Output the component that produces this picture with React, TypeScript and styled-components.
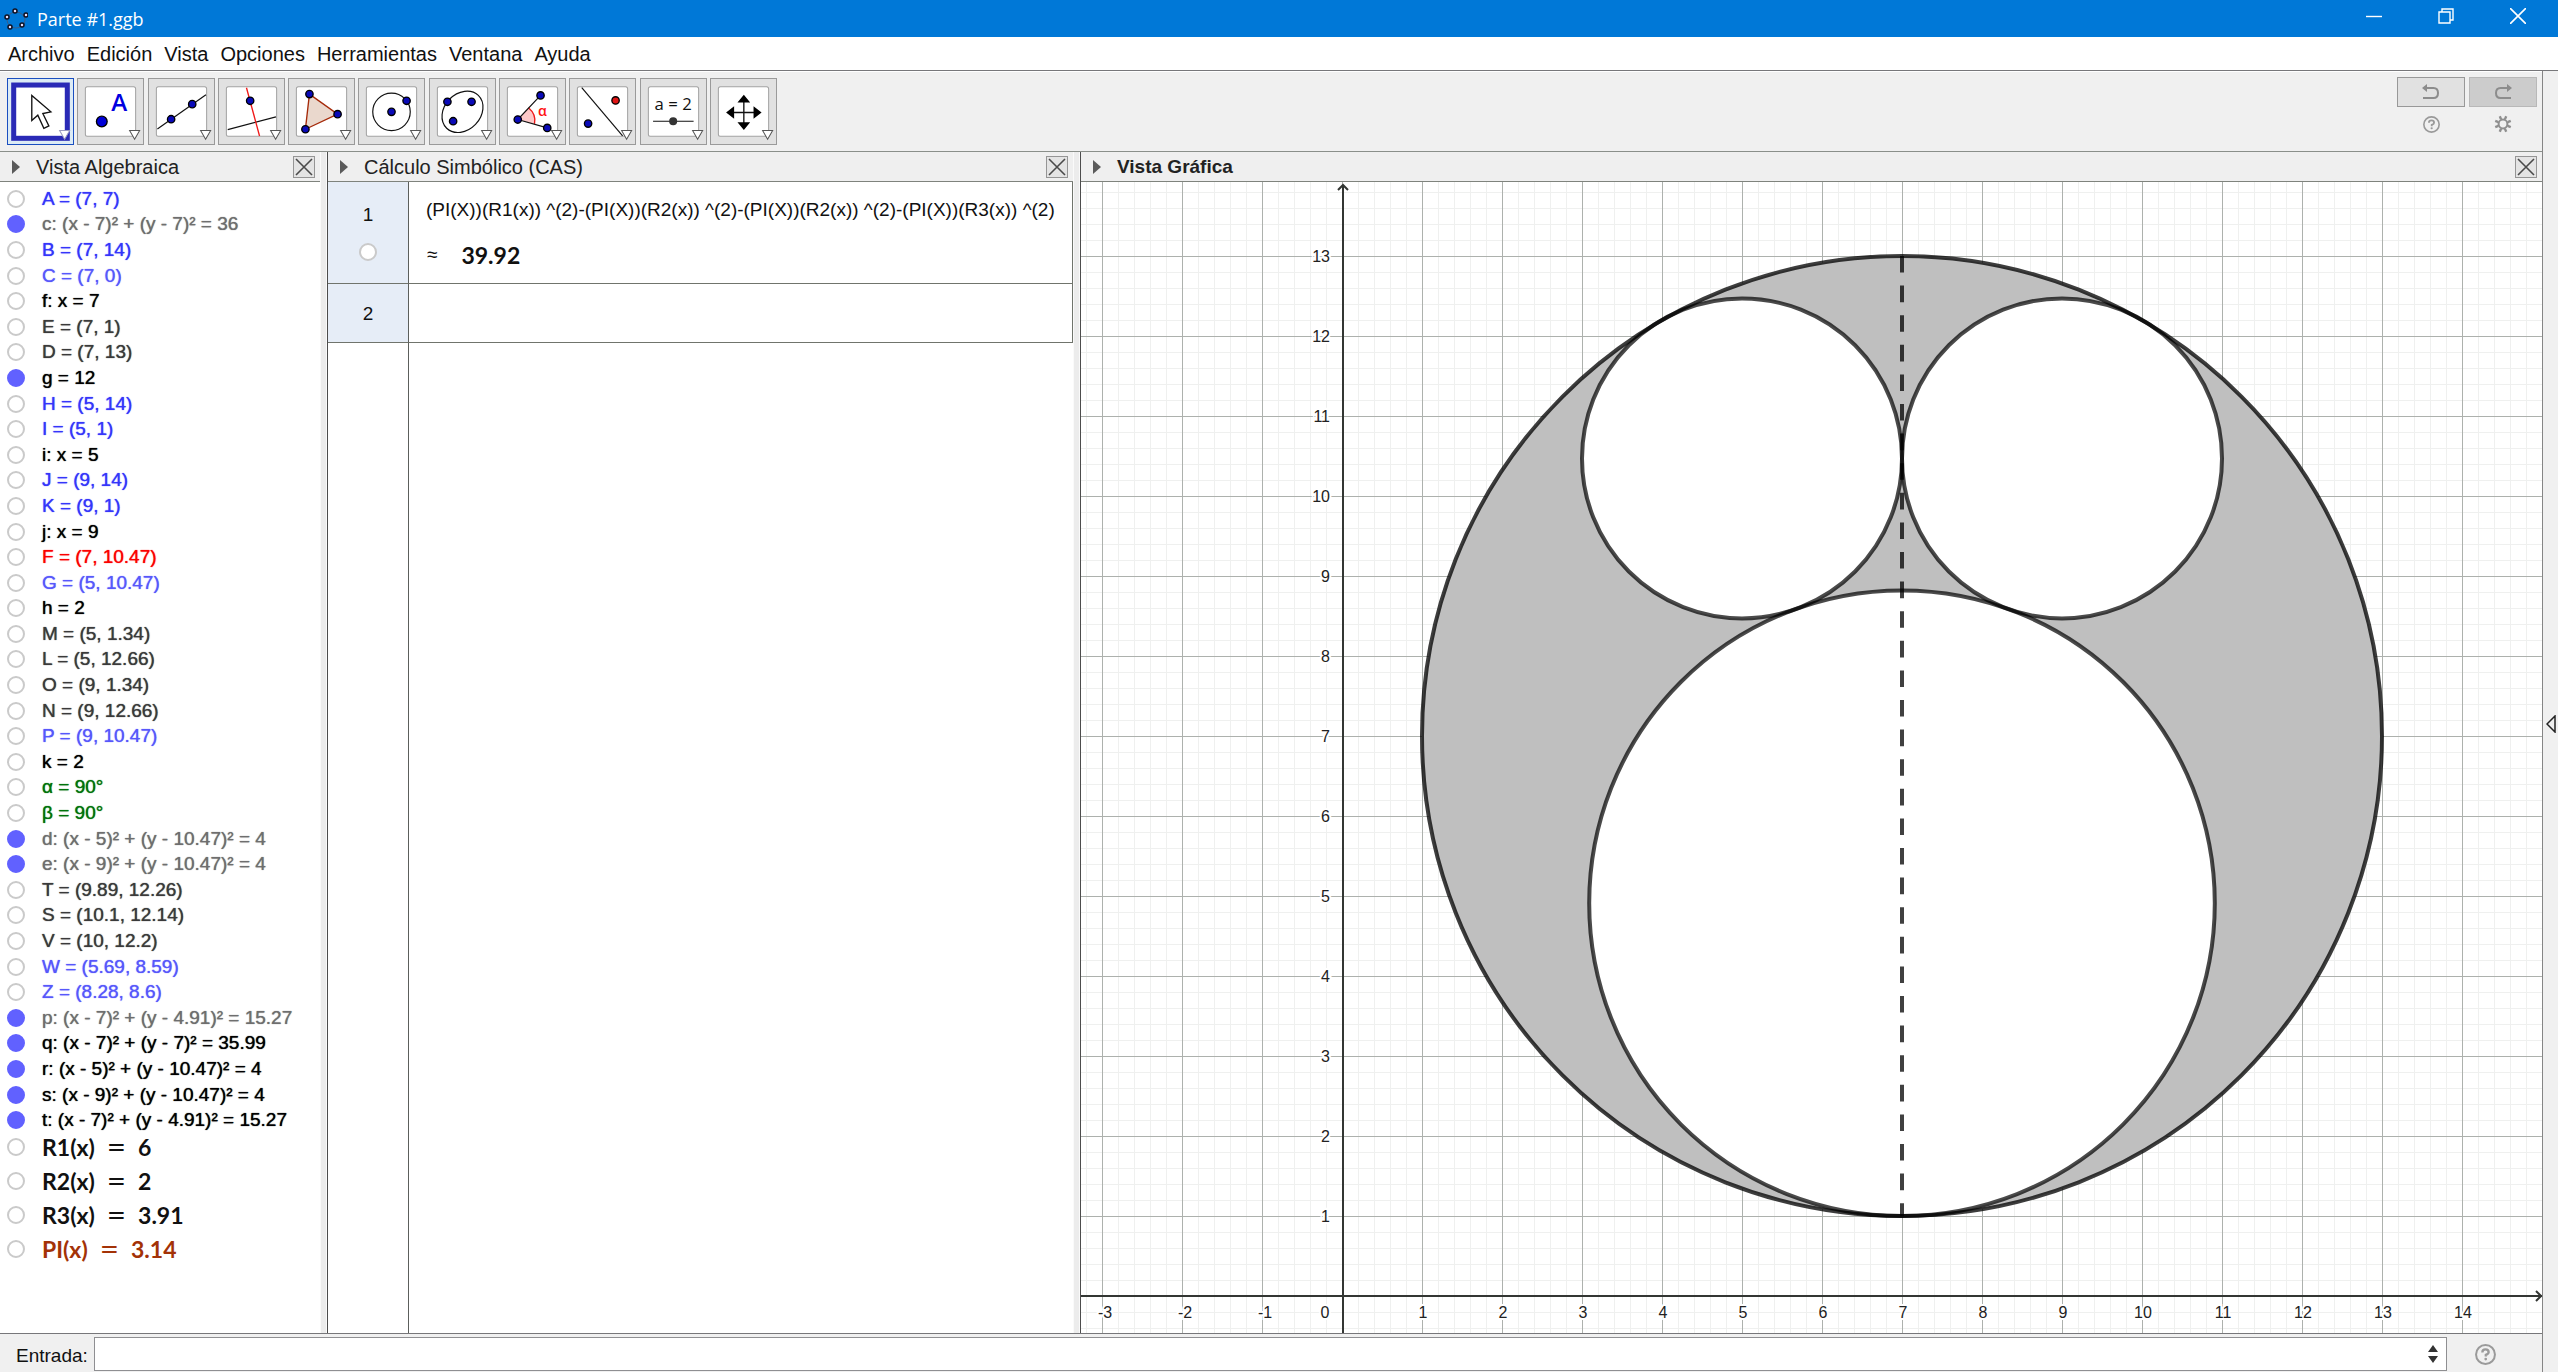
import React, { ReactNode } from "react";
import styled, { createGlobalStyle } from "styled-components";

const GlobalStyle = createGlobalStyle`
  *, *::before, *::after { box-sizing: border-box; }
  html, body { margin: 0; padding: 0; }
  body {
    font-family: "Liberation Sans", Arial, sans-serif;
    font-size: 19px;
    color: #111;
    background: #f0f0f0;
  }
  button, input { font: inherit; color: inherit; }
`;

/* ---------- window frame ---------- */

const Window = styled.div`
  display: flex;
  flex-direction: column;
  height: 100vh;
  overflow: hidden;
`;

const TitleBar = styled.header`
  display: flex;
  align-items: center;
  height: 37px;
  flex: none;
  padding: 0 4px;
  background: #0078d7;
  color: #fff;
`;

const WindowTitle = styled.h1`
  flex: 1;
  margin: 0 0 0 9px;
  font: 400 18px/24px "Open Sans", "Noto Sans", sans-serif;
`;

const CaptionButton = styled.button`
  display: flex;
  justify-content: center;
  width: 72px;
  height: 37px;
  padding: 8px 0 0;
  border: 0;
  background: transparent;
`;

const CaptionButtons = styled.div`
  display: flex;
`;

const MenuBar = styled.nav`
  display: flex;
  align-items: center;
  gap: 12px;
  height: 34px;
  flex: none;
  padding: 0 8px;
  background: #fff;
  border-bottom: 1px solid #77777a;
`;

const MenuItem = styled.button`
  padding: 0;
  border: 0;
  background: transparent;
  font-size: 20px;
  line-height: 24px;
`;

const Work = styled.div`
  display: flex;
  flex: 1;
  min-height: 0;
`;

const Main = styled.main`
  display: flex;
  flex-direction: column;
  flex: 1;
  min-width: 0;
`;

const SideStrip = styled.aside`
  display: flex;
  align-items: center;
  justify-content: center;
  width: 16px;
  flex: none;
  border-left: 1px solid #858585;
`;

const SideToggle = styled.button`
  display: flex;
  padding: 4px 0 0 1px;
  border: 0;
  background: transparent;
`;

/* ---------- toolbar ---------- */

const Toolbar = styled.div`
  display: flex;
  justify-content: space-between;
  height: 81px;
  flex: none;
  padding: 6px 5px 0 7px;
  border-top: 1px solid #fff;
  border-bottom: 1px solid #8a8f8a;
`;

const ToolGroup = styled.div`
  display: flex;
  justify-content: space-between;
  width: 770px;
`;

const ToolButton = styled.button<{ $active?: boolean }>`
  width: 67px;
  height: 67px;
  padding: 0;
  border: 1px solid ${(p) => (p.$active ? "#1a4fc0" : "#9a9a9a")};
  background: ${(p) => (p.$active ? "#dcebf5" : "#e1e1e1")};
  svg { display: block; margin: -1px; }
`;

const Actions = styled.div`
  display: grid;
  grid-template-columns: 68px 68px;
  grid-template-rows: 30px 34px;
  column-gap: 4px;
  justify-items: center;
  align-items: center;
  align-content: start;
  margin-top: -1px;
`;

const HistoryButton = styled.button<{ $off?: boolean }>`
  display: flex;
  align-items: center;
  justify-content: center;
  width: 68px;
  height: 30px;
  padding: 0;
  border: 1px solid ${(p) => (p.$off ? "#b8b8b8" : "#989898")};
  background: ${(p) => (p.$off ? "#cccccc" : "#e1e1e1")};
`;

const IconButton = styled.button`
  display: flex;
  padding: 0;
  border: 0;
  background: transparent;
`;

/* ---------- panels ---------- */

const Panels = styled.div`
  display: grid;
  grid-template-columns: 320px 7px 746px 7px minmax(0, 1fr);
  flex: 1;
  min-height: 0;
`;

const Splitter = styled.div`
  border-left: 1px solid #fafafa;
  border-right: 1px solid #fafafa;
  background: #ececec;
`;

const Panel = styled.section<{ $line?: boolean }>`
  display: flex;
  flex-direction: column;
  min-width: 0;
  min-height: 0;
  background: #fff;
  border-left: ${(p) => (p.$line ? "1px solid #4c4c4c" : "0")};
`;

const PanelHeader = styled.div`
  display: flex;
  align-items: center;
  gap: 16px;
  height: 30px;
  flex: none;
  padding: 0 5px 0 12px;
  background: #efefef;
  border-bottom: 1px solid #7f837d;
`;

const PanelTitle = styled.h2<{ $bold?: boolean }>`
  flex: 1;
  margin: 0;
  font-size: ${(p) => (p.$bold ? "19px" : "20px")};
  line-height: 24px;
  font-weight: ${(p) => (p.$bold ? 700 : 400)};
  color: #222;
`;

const CloseButton = styled.button`
  display: flex;
  align-items: center;
  justify-content: center;
  width: 22px;
  height: 22px;
  padding: 0;
  border: 1px solid #959595;
  background: #e4e4e4;
`;

/* ---------- algebra list ---------- */

const AlgebraBody = styled.div`
  padding-top: 4px;
  overflow: hidden;
`;

const ObjectList = styled.ul`
  display: grid;
  grid-auto-rows: 1fr;
  height: 947px;
  margin: 0;
  padding: 0;
  list-style: none;
`;

const FunctionList = styled(ObjectList)`
  grid-auto-rows: 34px;
  height: auto;
  margin-top: -3px;
`;

const ObjectRow = styled.li`
  display: flex;
  align-items: center;
  min-height: 0;
`;

const ObjectLabel = styled.label<{ $color: string }>`
  display: flex;
  align-items: center;
  gap: 17px;
  padding-left: 7px;
  line-height: 24px;
  color: ${(p) => p.$color};
  text-shadow: 0 0 1px currentColor;
`;

const Marble = styled.input`
  appearance: none;
  width: 18px;
  height: 18px;
  flex: none;
  margin: 0;
  border: 2px solid #cacaca;
  border-radius: 50%;
  background: #fff;
  &:checked {
    border-color: #6161ff;
    background: #6161ff;
  }
`;

const Formula = styled.span`
  display: flex;
  align-items: center;
  gap: 12px;
  font: 700 23px/28px Lato, "Open Sans", sans-serif;
  text-shadow: none;
`;

const Equals = styled.span`
  font: 400 23px/28px "DejaVu Sans", sans-serif;
`;

/* ---------- CAS table ---------- */

const CasTable = styled.table`
  width: 100%;
  height: 100%;
  border-collapse: separate;
  border-spacing: 0;
`;

const CasRow = styled.tr<{ $height?: string }>`
  height: ${(p) => p.$height || "auto"};
`;

const CasIndex = styled.th<{ $blank?: boolean }>`
  width: 81px;
  padding: 2px 0 0;
  font-weight: 400;
  border-right: 1px solid #5c5f5c;
  border-bottom: ${(p) => (p.$blank ? "0" : "1px solid #70746c")};
  background: ${(p) => (p.$blank ? "#fff" : "#e6edf7")};
`;

const CasIndexStack = styled.div`
  display: flex;
  flex-direction: column;
  align-items: center;
  gap: 16px;
  padding-bottom: 4px;
  line-height: 24px;
`;

const CasCell = styled.td<{ $blank?: boolean }>`
  padding: 0 0 0 17px;
  border-right: ${(p) => (p.$blank ? "0" : "1px solid #70746c")};
  border-bottom: ${(p) => (p.$blank ? "0" : "1px solid #70746c")};
`;

const CasInput = styled.div`
  line-height: 24px;
  margin-bottom: 20px;
  white-space: nowrap;
`;

const CasOutput = styled.div`
  display: flex;
  align-items: center;
  gap: 24px;
  height: 26px;
  padding-left: 1px;
`;

/* ---------- graphics ---------- */

const Plot = styled.svg`
  display: block;
  width: 100%;
  flex: 1;
  min-height: 0;
  font-family: "Liberation Sans", Arial, sans-serif;
  font-size: 16px;
`;

const AxisLabel = styled.text`
  fill: #222;
  stroke: #fff;
  stroke-width: 4px;
  paint-order: stroke;
`;

/* ---------- input bar ---------- */

const InputBar = styled.form`
  display: flex;
  align-items: center;
  height: 39px;
  flex: none;
  padding: 2px 46px 0 16px;
  border-top: 1px solid #77777a;
`;

const InputLabel = styled.label`
  width: 78px;
  padding-top: 3px;
  line-height: 24px;
`;

const InputFrame = styled.div`
  display: flex;
  align-items: center;
  flex: 1;
  height: 34px;
  margin-right: 28px;
  padding-right: 8px;
  border: 1px solid #8f8f92;
  background: #fff;
`;

const CommandInput = styled.input`
  flex: 1;
  min-width: 0;
  height: 30px;
  padding: 0 6px;
  border: 0;
  outline: 0;
  background: transparent;
`;

/* ---------- data ---------- */

const BLUE = "#3535fa";
const PALE = "#5757fb";
const DARK = "#3a3a3a";
const GREY = "#6e6e6e";
const BLACK = "#000";
const GREEN = "#00720a";

type Item = [text: string, color: string, shown?: boolean];

const objects: Item[] = [
  ["A = (7, 7)", BLUE],
  ["c: (x - 7)² + (y - 7)² = 36", GREY, true],
  ["B = (7, 14)", BLUE],
  ["C = (7, 0)", PALE],
  ["f: x = 7", BLACK],
  ["E = (7, 1)", DARK],
  ["D = (7, 13)", DARK],
  ["g = 12", BLACK, true],
  ["H = (5, 14)", BLUE],
  ["I = (5, 1)", BLUE],
  ["i: x = 5", BLACK],
  ["J = (9, 14)", BLUE],
  ["K = (9, 1)", BLUE],
  ["j: x = 9", BLACK],
  ["F = (7, 10.47)", "#fb0000"],
  ["G = (5, 10.47)", PALE],
  ["h = 2", BLACK],
  ["M = (5, 1.34)", DARK],
  ["L = (5, 12.66)", DARK],
  ["O = (9, 1.34)", DARK],
  ["N = (9, 12.66)", DARK],
  ["P = (9, 10.47)", PALE],
  ["k = 2", BLACK],
  ["α = 90°", GREEN],
  ["β = 90°", GREEN],
  ["d: (x - 5)² + (y - 10.47)² = 4", GREY, true],
  ["e: (x - 9)² + (y - 10.47)² = 4", GREY, true],
  ["T = (9.89, 12.26)", DARK],
  ["S = (10.1, 12.14)", DARK],
  ["V = (10, 12.2)", DARK],
  ["W = (5.69, 8.59)", PALE],
  ["Z = (8.28, 8.6)", PALE],
  ["p: (x - 7)² + (y - 4.91)² = 15.27", GREY, true],
  ["q: (x - 7)² + (y - 7)² = 35.99", BLACK, true],
  ["r: (x - 5)² + (y - 10.47)² = 4", BLACK, true],
  ["s: (x - 9)² + (y - 10.47)² = 4", BLACK, true],
  ["t: (x - 7)² + (y - 4.91)² = 15.27", BLACK, true],
];

const functions = [
  { name: "R1(x)", value: "6", color: "#111" },
  { name: "R2(x)", value: "2", color: "#111" },
  { name: "R3(x)", value: "3.91", color: "#111" },
  { name: "PI(x)", value: "3.14", color: "#a33207" },
];

/* ---------- tool icons: drawn on a 200 unit wide button face ---------- */

const Dot = ({ x, y, r = 11, fill = "#0a0ab8" }: { x: number; y: number; r?: number; fill?: string }) => (
  <circle cx={x} cy={y} r={r} fill={fill} stroke="#000" strokeWidth={4} />
);

interface Tool {
  name: string;
  left: number;
  art: ReactNode;
}

const line = { stroke: "#111", strokeWidth: 3.5, fill: "none" };

const tools: Tool[] = [
  {
    name: "Elige y mueve",
    left: 20,
    art: <path d="M94 287V362L112 346L130 385L145 378L127 341L151 336Z" fill="#fff" stroke="#111" strokeWidth={4} />,
  },
  {
    name: "Punto",
    left: 231,
    art: (
      <>
        <Dot x={305} y={365} r={16} fill="#0000d8" />
        <text x={357} y={335} textAnchor="middle" fontSize={72} fontFamily="Open Sans" fontWeight={600} fill="#0000e0">A</text>
      </>
    ),
  },
  {
    name: "Recta",
    left: 442,
    art: (
      <>
        <path d="M470 387L615 285" {...line} />
        <Dot x={511} y={358} />
        <Dot x={574} y={313} />
      </>
    ),
  },
  {
    name: "Perpendicular",
    left: 653,
    art: (
      <>
        <path d="M682 389L826 351" {...line} />
        <path d="M738 264L777 408" {...line} stroke="#f01818" strokeWidth={4} />
        <Dot x={749} y={303} />
      </>
    ),
  },
  {
    name: "Polígono",
    left: 865,
    art: (
      <>
        <path d="M929 283L1013 343L917 388Z" fill="#ead8cd" stroke="#a52a0a" strokeWidth={4} />
        <Dot x={929} y={283} />
        <Dot x={1013} y={343} />
        <Dot x={917} y={388} />
      </>
    ),
  },
  {
    name: "Circunferencia",
    left: 1076,
    art: (
      <>
        <circle cx={1176} cy={336} r={56} {...line} />
        <Dot x={1176} y={336} />
        <Dot x={1221} y={303} />
      </>
    ),
  },
  {
    name: "Elipse",
    left: 88,
    art: (
      <>
        <ellipse cx={188} cy={336} rx={68} ry={54} transform="rotate(-46 188 336)" {...line} />
        <Dot x={143} y={306} />
        <Dot x={215} y={306} />
        <Dot x={160} y={364} />
      </>
    ),
  },
  {
    name: "Ángulo",
    left: 298,
    art: (
      <>
        <path d="M354 359L386 324Q410 344 404 372Z" fill="#fcc8c8" stroke="none" />
        <path d="M386 324Q410 344 404 372" fill="none" stroke="#f01818" strokeWidth={4} />
        <path d="M422 287L354 359L442 384" {...line} />
        <Dot x={422} y={287} />
        <Dot x={354} y={359} />
        <Dot x={442} y={384} />
        <text x={428} y={348} textAnchor="middle" fontSize={42} fontFamily="Open Sans" fontWeight={600} fill="#ff1010">α</text>
      </>
    ),
  },
  {
    name: "Simetría axial",
    left: 510,
    art: (
      <>
        <path d="M548 264L670 408" {...line} />
        <Dot x={567} y={371} />
        <Dot x={649} y={302} fill="#e01515" />
      </>
    ),
  },
  {
    name: "Deslizador",
    left: 721,
    art: (
      <>
        <text x={820} y={330} textAnchor="middle" fontSize={50} fontFamily="Open Sans" fill="#111">a = 2</text>
        <path d="M760 364H881" {...line} />
        <circle cx={820} cy={364} r={12} fill="#333" />
      </>
    ),
  },
  {
    name: "Desplaza vista gráfica",
    left: 932,
    art: (
      <>
        <path d="M1033 300V376M996 338H1070" {...line} strokeWidth={4} />
        <path
          d="M1033 285L1052 308H1014ZM1033 390L1052 367H1014ZM980 338L1004 319V357ZM1086 338L1062 319V357Z"
          fill="#000"
        />
      </>
    ),
  },
];

const ToolIcon = ({ tool, active }: { tool: Tool; active: boolean }) => {
  const l = tool.left;
  return (
    <svg width="67" height="67" viewBox={`${l} 235 200 200`} aria-hidden="true">
      {active ? (
        <rect x={l + 20} y={256} width={160} height={159} fill="#fff" stroke="#2a2ab6" strokeWidth={15} />
      ) : (
        <rect x={l + 25} y={261} width={150} height={148} rx={6} fill="#fff" stroke="#a2a2a2" strokeWidth={3} />
      )}
      {tool.art}
      <path d={`M${l + 157} 392H${l + 187}L${l + 172} 418Z`} fill="#fff" stroke={active ? "#9a9ac0" : "#555"} strokeWidth={3} />
    </svg>
  );
};

const CloseIcon = () => (
  <svg width="18" height="18" viewBox="0 0 18 18" stroke="#4a4a4a" strokeWidth="1.6" aria-hidden="true">
    <path d="M1 1L17 17M17 1L1 17" />
  </svg>
);

const HelpIcon = ({ size }: { size: number }) => (
  <svg width={size} height={size} viewBox="0 0 20 20" fill="none" stroke="#9a9a9a" aria-hidden="true">
    <circle cx="10" cy="10" r="9" strokeWidth="1.9" />
    <path d="M7 8Q7 5.2 10 5.2T13 7.8Q13 9.2 10.3 10.4V12" strokeWidth="2.2" />
    <circle cx="10.2" cy="14.4" r="1.3" fill="#9a9a9a" stroke="none" />
  </svg>
);

const GearIcon = () => (
  <svg width="18" height="18" viewBox="-9 -9 18 18" stroke="#8f8f8f" aria-hidden="true">
    <circle r="4.4" fill="none" strokeWidth="2" />
    {[22.5, 67.5, 112.5, 157.5, 202.5, 247.5, 292.5, 337.5].map((a) => (
      <path key={a} d="M0 -5V-8.4" strokeWidth="2.4" transform={`rotate(${a})`} />
    ))}
  </svg>
);

const HistoryIcon = ({ flip }: { flip?: boolean }) => (
  <svg width="18" height="16" viewBox="0 0 18 16" fill="none" stroke="#8c8c8c" strokeWidth="2" aria-hidden="true">
    <g transform={flip ? "matrix(-1 0 0 1 18 0)" : undefined}>
      <path d="M4 4H11.5Q16 4 16 9T11.5 14H1" />
      <path d="M0 4L5 0V8Z" fill="#8c8c8c" stroke="none" />
    </g>
  </svg>
);

const HeaderArrow = () => (
  <svg width="8" height="14" viewBox="0 0 8 14" aria-hidden="true">
    <path d="M0 0L8 7L0 14Z" fill="#5a5a5a" />
  </svg>
);

const AppLogo = () => (
  <svg width="24" height="24" viewBox="0 0 24 24" aria-hidden="true">
    <ellipse cx="12" cy="13" rx="9" ry="8" fill="none" stroke="#3a5f8a" strokeWidth="1" />
    {[
      [3, 10],
      [11, 4],
      [22, 8],
      [18, 18],
      [6, 20],
    ].map(([x, y]) => (
      <circle key={x} cx={x} cy={y} r="2" fill="#e6defa" stroke="#101020" strokeWidth="1.5" />
    ))}
  </svg>
);

/* ---------- drawing area ---------- */

const UNIT = 80;
const ORIGIN_X = 262;
const ORIGIN_Y = 1114;
const px = (x: number) => ORIGIN_X + x * UNIT;
const py = (y: number) => ORIGIN_Y - y * UNIT;
const range = (from: number, to: number) => Array.from({ length: to - from + 1 }, (_, i) => from + i);

const BIG = { x: 7, y: 7, r: 6 };
const INNER = [
  { x: 5, y: 10.47, r: 2 },
  { x: 9, y: 10.47, r: 2 },
  { x: 7, y: 4.91, r: 3.91 },
];

const Graphics = () => (
  <Plot role="img" aria-label="Vista Gráfica">
    <defs>
      <pattern id="minor" x={ORIGIN_X - 1} y={ORIGIN_Y} width={16} height={16} patternUnits="userSpaceOnUse">
        <path d="M0 0H16V1H1V16H0Z" fill="#eff0ef" />
      </pattern>
      <pattern id="major" x={ORIGIN_X - 1} y={ORIGIN_Y} width={UNIT} height={UNIT} patternUnits="userSpaceOnUse">
        <path d="M0 0H80V1H1V80H0Z" fill="#adb1ad" />
      </pattern>
    </defs>
    <rect width="100%" height="100%" fill="url(#minor)" />
    <rect width="100%" height="100%" fill="url(#major)" />
    <g stroke="#333633" strokeWidth={2} fill="none">
      <line x1={ORIGIN_X} x2={ORIGIN_X} y1={3} y2="100%" />
      <path d="M257 8L262 3L267 8" />
      <line x1={0} x2="100%" y1={ORIGIN_Y} y2={ORIGIN_Y} />
      <svg x="100%" y={ORIGIN_Y} overflow="visible">
        <path d="M-6 -5L-1 0L-6 5" />
      </svg>
    </g>
    {range(-3, 14).map((n) => (
      <AxisLabel key={n} x={n === 0 ? px(0) - 18 : n < 0 ? px(n) + 2 : px(n)} y={ORIGIN_Y + 22} textAnchor="middle">
        {n}
      </AxisLabel>
    ))}
    {range(1, 13).map((n) => (
      <AxisLabel key={n} x={px(0) - 13} y={py(n) + 6} textAnchor="end">
        {n}
      </AxisLabel>
    ))}
    <g transform="translate(-1 0)">
      <circle cx={px(BIG.x)} cy={py(BIG.y)} r={BIG.r * UNIT} fill="#bfbfbf" />
      {INNER.map((c) => (
        <circle key={`${c.x}-${c.y}`} cx={px(c.x)} cy={py(c.y)} r={c.r * UNIT} fill="#fff" />
      ))}
      <g fill="none" stroke="#000" strokeWidth={4}>
        <circle cx={px(BIG.x)} cy={py(BIG.y)} r={BIG.r * UNIT} strokeOpacity={0.76} />
        {INNER.map((c) => (
          <circle key={`${c.x}-${c.y}`} cx={px(c.x)} cy={py(c.y)} r={c.r * UNIT} strokeOpacity={0.71} />
        ))}
        <line x1={px(7)} x2={px(7)} y1={py(13)} y2={py(1)} strokeOpacity={0.75} strokeDasharray="16.6 13" />
      </g>
    </g>
  </Plot>
);

/* ---------- app ---------- */

const menus = ["Archivo", "Edición", "Vista", "Opciones", "Herramientas", "Ventana", "Ayuda"];

const Header = ({ title, bold }: { title: string; bold?: boolean }) => (
  <PanelHeader>
    <HeaderArrow />
    <PanelTitle $bold={bold}>{title}</PanelTitle>
    <CloseButton type="button" aria-label={`Cerrar ${title}`}>
      <CloseIcon />
    </CloseButton>
  </PanelHeader>
);

export default function App() {
  return (
    <Window>
      <GlobalStyle />
      <TitleBar>
        <AppLogo />
        <WindowTitle>Parte #1.ggb</WindowTitle>
        <CaptionButtons>
          <CaptionButton type="button" aria-label="Minimizar">
            <svg width="16" height="16" stroke="#fff" strokeWidth="1.4"><path d="M0 8.5H16" /></svg>
          </CaptionButton>
          <CaptionButton type="button" aria-label="Restaurar">
            <svg width="16" height="16" fill="none" stroke="#fff" strokeWidth="1.4">
              <path d="M1 4H12V15H1ZM4 4V1H15V12H12" />
            </svg>
          </CaptionButton>
          <CaptionButton type="button" aria-label="Cerrar">
            <svg width="16" height="16" stroke="#fff" strokeWidth="1.6"><path d="M0 0L16 16M16 0L0 16" /></svg>
          </CaptionButton>
        </CaptionButtons>
      </TitleBar>
      <MenuBar>
        {menus.map((m) => (
          <MenuItem type="button" key={m}>{m}</MenuItem>
        ))}
      </MenuBar>
      <Work>
        <Main>
          <Toolbar>
            <ToolGroup>
              {tools.map((t, i) => (
                <ToolButton type="button" key={t.name} aria-label={t.name} $active={i === 0}>
                  <ToolIcon tool={t} active={i === 0} />
                </ToolButton>
              ))}
            </ToolGroup>
            <Actions>
              <HistoryButton type="button" aria-label="Deshace"><HistoryIcon /></HistoryButton>
              <HistoryButton type="button" aria-label="Rehace" $off><HistoryIcon flip /></HistoryButton>
              <IconButton type="button" aria-label="Ayuda"><HelpIcon size={17} /></IconButton>
              <IconButton type="button" aria-label="Preferencias"><GearIcon /></IconButton>
            </Actions>
          </Toolbar>
          <Panels>
            <Panel>
              <Header title="Vista Algebraica" />
              <AlgebraBody>
                <ObjectList>
                  {objects.map(([text, color, shown]) => (
                    <ObjectRow key={text}>
                      <ObjectLabel $color={color}>
                        <Marble type="checkbox" defaultChecked={shown} />
                        {text}
                      </ObjectLabel>
                    </ObjectRow>
                  ))}
                </ObjectList>
                <FunctionList>
                  {functions.map((f) => (
                    <ObjectRow key={f.name}>
                      <ObjectLabel $color={f.color}>
                        <Marble type="checkbox" />
                        <Formula>
                          <span>{f.name}</span>
                          <Equals>=</Equals>
                          <span>{f.value}</span>
                        </Formula>
                      </ObjectLabel>
                    </ObjectRow>
                  ))}
                </FunctionList>
              </AlgebraBody>
            </Panel>
            <Splitter />
            <Panel $line>
              <Header title="Cálculo Simbólico (CAS)" />
              <CasTable>
                <tbody>
                  <CasRow $height="102px">
                    <CasIndex scope="row">
                      <CasIndexStack>
                        1
                        <Marble type="checkbox" aria-label="Mostrar 1" />
                      </CasIndexStack>
                    </CasIndex>
                    <CasCell>
                      <CasInput>
                        (PI(X))(R1(x)) ^(2)-(PI(X))(R2(x)) ^(2)-(PI(X))(R2(x)) ^(2)-(PI(X))(R3(x)) ^(2)
                      </CasInput>
                      <CasOutput>
                        <span>≈</span>
                        <Formula>39.92</Formula>
                      </CasOutput>
                    </CasCell>
                  </CasRow>
                  <CasRow $height="59px">
                    <CasIndex scope="row">2</CasIndex>
                    <CasCell />
                  </CasRow>
                  <CasRow>
                    <CasIndex $blank />
                    <CasCell $blank />
                  </CasRow>
                </tbody>
              </CasTable>
            </Panel>
            <Splitter />
            <Panel $line>
              <Header title="Vista Gráfica" bold />
              <Graphics />
            </Panel>
          </Panels>
          <InputBar onSubmit={(e: React.FormEvent) => e.preventDefault()}>
            <InputLabel htmlFor="entrada">Entrada:</InputLabel>
            <InputFrame>
              <CommandInput id="entrada" type="text" />
              <IconButton type="button" aria-label="Historial">
                <svg width="10" height="20" fill="#333" aria-hidden="true">
                  <path d="M5 1L10 8H0ZM5 19L10 12H0Z" />
                </svg>
              </IconButton>
            </InputFrame>
            <IconButton type="button" aria-label="Ayuda de entrada"><HelpIcon size={21} /></IconButton>
          </InputBar>
        </Main>
        <SideStrip>
          <SideToggle type="button" aria-label="Mostrar barra lateral">
            <svg width="10" height="18" fill="#eee" stroke="#222" strokeWidth="1.5">
              <path d="M9 1V17L1 9Z" />
            </svg>
          </SideToggle>
        </SideStrip>
      </Work>
    </Window>
  );
}
